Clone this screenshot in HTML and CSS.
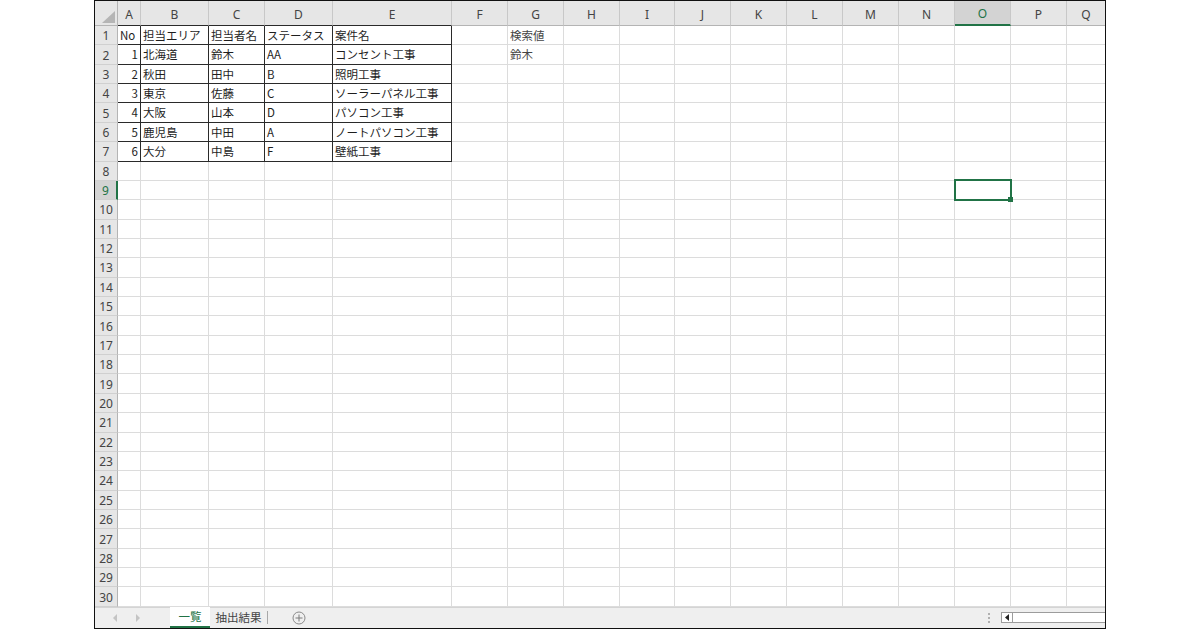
FILE: index.html
```html
<!DOCTYPE html>
<html lang="ja">
<head>
<meta charset="utf-8">
<title>Sheet</title>
<link rel="stylesheet" href="styles.css">
</head>
<body>
<div class="frame">
  <div class="sheet">
    <div class="row head">
      <div class="corner"><svg width="14" height="13" viewBox="0 0 14 13"><polygon points="13,0 13,12 0,12" fill="#b5b5b5"/></svg></div>
      <div class="ch tb">A</div><div class="ch tb">B</div><div class="ch tb">C</div><div class="ch tb">D</div><div class="ch tb">E</div><div class="ch">F</div><div class="ch">G</div><div class="ch">H</div><div class="ch">I</div><div class="ch">J</div><div class="ch">K</div><div class="ch">L</div><div class="ch">M</div><div class="ch">N</div><div class="ch sel">O</div><div class="ch">P</div><div class="ch last">Q</div>
    </div>
    <div class="row"><div class="rh">1</div><div class="c t">No</div><div class="c t">担当エリア</div><div class="c t">担当者名</div><div class="c t">ステータス</div><div class="c t">案件名</div><div class="c"></div><div class="c g">検索値</div><i></i><i></i><i></i><i></i><i></i><i></i><i></i><i></i><i></i><i class="last"></i></div>
    <div class="row"><div class="rh">2</div><div class="c t n">1</div><div class="c t">北海道</div><div class="c t">鈴木</div><div class="c t">AA</div><div class="c t">コンセント工事</div><div class="c"></div><div class="c g">鈴木</div><i></i><i></i><i></i><i></i><i></i><i></i><i></i><i></i><i></i><i class="last"></i></div>
    <div class="row"><div class="rh">3</div><div class="c t n">2</div><div class="c t">秋田</div><div class="c t">田中</div><div class="c t">B</div><div class="c t">照明工事</div><i></i><i></i><i></i><i></i><i></i><i></i><i></i><i></i><i></i><i></i><i></i><i class="last"></i></div>
    <div class="row"><div class="rh">4</div><div class="c t n">3</div><div class="c t">東京</div><div class="c t">佐藤</div><div class="c t">C</div><div class="c t">ソーラーパネル工事</div><i></i><i></i><i></i><i></i><i></i><i></i><i></i><i></i><i></i><i></i><i></i><i class="last"></i></div>
    <div class="row"><div class="rh">5</div><div class="c t n">4</div><div class="c t">大阪</div><div class="c t">山本</div><div class="c t">D</div><div class="c t">パソコン工事</div><i></i><i></i><i></i><i></i><i></i><i></i><i></i><i></i><i></i><i></i><i></i><i class="last"></i></div>
    <div class="row"><div class="rh">6</div><div class="c t n">5</div><div class="c t">鹿児島</div><div class="c t">中田</div><div class="c t">A</div><div class="c t">ノートパソコン工事</div><i></i><i></i><i></i><i></i><i></i><i></i><i></i><i></i><i></i><i></i><i></i><i class="last"></i></div>
    <div class="row"><div class="rh">7</div><div class="c t n">6</div><div class="c t">大分</div><div class="c t">中島</div><div class="c t">F</div><div class="c t">壁紙工事</div><i></i><i></i><i></i><i></i><i></i><i></i><i></i><i></i><i></i><i></i><i></i><i class="last"></i></div>
    <div class="row"><div class="rh">8</div><i></i><i></i><i></i><i></i><i></i><i></i><i></i><i></i><i></i><i></i><i></i><i></i><i></i><i></i><i></i><i></i><i class="last"></i></div>
    <div class="row"><div class="rh rsel">9</div><i></i><i></i><i></i><i></i><i></i><i></i><i></i><i></i><i></i><i></i><i></i><i></i><i></i><i></i><i class="active"></i><i></i><i class="last"></i></div>
    <div class="row"><div class="rh">10</div><i></i><i></i><i></i><i></i><i></i><i></i><i></i><i></i><i></i><i></i><i></i><i></i><i></i><i></i><i></i><i></i><i class="last"></i></div>
    <div class="row"><div class="rh">11</div><i></i><i></i><i></i><i></i><i></i><i></i><i></i><i></i><i></i><i></i><i></i><i></i><i></i><i></i><i></i><i></i><i class="last"></i></div>
    <div class="row"><div class="rh">12</div><i></i><i></i><i></i><i></i><i></i><i></i><i></i><i></i><i></i><i></i><i></i><i></i><i></i><i></i><i></i><i></i><i class="last"></i></div>
    <div class="row"><div class="rh">13</div><i></i><i></i><i></i><i></i><i></i><i></i><i></i><i></i><i></i><i></i><i></i><i></i><i></i><i></i><i></i><i></i><i class="last"></i></div>
    <div class="row"><div class="rh">14</div><i></i><i></i><i></i><i></i><i></i><i></i><i></i><i></i><i></i><i></i><i></i><i></i><i></i><i></i><i></i><i></i><i class="last"></i></div>
    <div class="row"><div class="rh">15</div><i></i><i></i><i></i><i></i><i></i><i></i><i></i><i></i><i></i><i></i><i></i><i></i><i></i><i></i><i></i><i></i><i class="last"></i></div>
    <div class="row"><div class="rh">16</div><i></i><i></i><i></i><i></i><i></i><i></i><i></i><i></i><i></i><i></i><i></i><i></i><i></i><i></i><i></i><i></i><i class="last"></i></div>
    <div class="row"><div class="rh">17</div><i></i><i></i><i></i><i></i><i></i><i></i><i></i><i></i><i></i><i></i><i></i><i></i><i></i><i></i><i></i><i></i><i class="last"></i></div>
    <div class="row"><div class="rh">18</div><i></i><i></i><i></i><i></i><i></i><i></i><i></i><i></i><i></i><i></i><i></i><i></i><i></i><i></i><i></i><i></i><i class="last"></i></div>
    <div class="row"><div class="rh">19</div><i></i><i></i><i></i><i></i><i></i><i></i><i></i><i></i><i></i><i></i><i></i><i></i><i></i><i></i><i></i><i></i><i class="last"></i></div>
    <div class="row"><div class="rh">20</div><i></i><i></i><i></i><i></i><i></i><i></i><i></i><i></i><i></i><i></i><i></i><i></i><i></i><i></i><i></i><i></i><i class="last"></i></div>
    <div class="row"><div class="rh">21</div><i></i><i></i><i></i><i></i><i></i><i></i><i></i><i></i><i></i><i></i><i></i><i></i><i></i><i></i><i></i><i></i><i class="last"></i></div>
    <div class="row"><div class="rh">22</div><i></i><i></i><i></i><i></i><i></i><i></i><i></i><i></i><i></i><i></i><i></i><i></i><i></i><i></i><i></i><i></i><i class="last"></i></div>
    <div class="row"><div class="rh">23</div><i></i><i></i><i></i><i></i><i></i><i></i><i></i><i></i><i></i><i></i><i></i><i></i><i></i><i></i><i></i><i></i><i class="last"></i></div>
    <div class="row"><div class="rh">24</div><i></i><i></i><i></i><i></i><i></i><i></i><i></i><i></i><i></i><i></i><i></i><i></i><i></i><i></i><i></i><i></i><i class="last"></i></div>
    <div class="row"><div class="rh">25</div><i></i><i></i><i></i><i></i><i></i><i></i><i></i><i></i><i></i><i></i><i></i><i></i><i></i><i></i><i></i><i></i><i class="last"></i></div>
    <div class="row"><div class="rh">26</div><i></i><i></i><i></i><i></i><i></i><i></i><i></i><i></i><i></i><i></i><i></i><i></i><i></i><i></i><i></i><i></i><i class="last"></i></div>
    <div class="row"><div class="rh">27</div><i></i><i></i><i></i><i></i><i></i><i></i><i></i><i></i><i></i><i></i><i></i><i></i><i></i><i></i><i></i><i></i><i class="last"></i></div>
    <div class="row"><div class="rh">28</div><i></i><i></i><i></i><i></i><i></i><i></i><i></i><i></i><i></i><i></i><i></i><i></i><i></i><i></i><i></i><i></i><i class="last"></i></div>
    <div class="row"><div class="rh">29</div><i></i><i></i><i></i><i></i><i></i><i></i><i></i><i></i><i></i><i></i><i></i><i></i><i></i><i></i><i></i><i></i><i class="last"></i></div>
    <div class="row"><div class="rh">30</div><i></i><i></i><i></i><i></i><i></i><i></i><i></i><i></i><i></i><i></i><i></i><i></i><i></i><i></i><i></i><i></i><i class="last"></i></div>
  </div>
  <div class="tabbar">
    <div class="nav">
      <svg width="6" height="8" viewBox="0 0 6 8"><polygon points="5,0 5,8 1,4" fill="#c4c4c4"/></svg>
      <svg width="6" height="8" viewBox="0 0 6 8"><polygon points="1,0 1,8 5,4" fill="#c4c4c4"/></svg>
    </div>
    <div class="tab on">一覧</div>
    <div class="tab">抽出結果</div>
    <div class="tsep"></div>
    <div class="add"><svg width="14" height="14" viewBox="0 0 14 14"><circle cx="7" cy="7" r="6" fill="none" stroke="#8a8a8a" stroke-width="1"/><path d="M7 3.5V10.5M3.5 7H10.5" stroke="#7a7a7a" stroke-width="1"/></svg></div>
    <div class="spacer"></div>
    <div class="grip"><span></span><span></span><span></span></div>
    <div class="hscroll"><div class="harrow"><svg width="5" height="7" viewBox="0 0 5 7"><polygon points="4,0 4,7 0,3.5" fill="#222"/></svg></div><div class="htrack"></div></div>
  </div>
</div>
</body>
</html>
```

FILE: styles.css
```css
* { box-sizing: border-box; }
html, body { margin: 0; padding: 0; background: #ffffff; }
body { width: 1200px; height: 630px; overflow: hidden; }

.frame {
  margin-left: 94px;
  width: 1012px;
  height: 629px;
  border: 1px solid #111;
  display: flex;
  flex-direction: column;
  background: #fff;
  overflow: hidden;
}

.sheet {
  display: grid;
  grid-template-rows: 25px repeat(30, 19.37px);
}

.row {
  display: grid;
  grid-template-columns: 23px 23px 68px 56px 68px 119px 56px 56px 56px 55px 56px 56px 56px 56px 56px 56px 56px 1fr;
}

.row > * {
  border-right: 1px solid #dcdcdc;
  border-bottom: 1px solid #dcdcdc;
  min-width: 0;
  overflow: hidden;
}
.row > .last { border-right: none; }

.corner {
  background: #e6e6e6;
  display: flex;
  align-items: flex-end;
  justify-content: flex-end;
  padding: 0 1px 1px 0;
}
.row.head > * {
  background: #e6e6e6;
  border-right: 1px solid #c8c8c8;
  border-bottom: 1px solid #b4b4b4;
}
.row.head > .corner { border-right: 1px solid #b4b4b4; }
.row.head > .last { border-right: none; }

.ch {
  display: flex;
  align-items: center;
  justify-content: center;
  padding-top: 2px;
  font-family: "Noto Sans", "Open Sans", sans-serif;
  font-size: 12px;
  color: #444;
}
.row.head > .ch.tb { border-bottom-color: #2a2a2a; }
.row.head > .ch.sel {
  background: #d3d3d3;
  color: #217346;
  border-bottom: 2px solid #217346;
}

.rh {
  background: #e6e6e6;
  display: flex;
  align-items: center;
  justify-content: center;
  font-family: "Noto Sans", "Open Sans", sans-serif;
  font-size: 12px;
  color: #444;
  padding-top: 1px;
}
.row > .rh {
  border-right: 1px solid #b4b4b4;
  border-bottom: 1px solid #d0d0d0;
}
.row > .rh.rsel {
  background: #d3d3d3;
  color: #217346;
  border-right: 2px solid #217346;
}

.c {
  display: flex;
  align-items: center;
  padding: 1px 0 0 2px;
  font-family: "Noto Sans CJK JP", "Noto Sans", sans-serif;
  font-size: 11.5px;
  line-height: 1;
  color: #1e1e1e;
  white-space: nowrap;
}
.row > .c.t {
  border-right: 1px solid #2a2a2a;
  border-bottom: 1px solid #2a2a2a;
}
.c.n { justify-content: flex-end; padding-right: 2px; padding-left: 0; }
.c.g { color: #444; }

.row > i.active {
  position: relative;
  overflow: visible;
}
.row > i.active::after {
  content: "";
  position: absolute;
  top: -2px;
  left: -1px;
  right: -2px;
  bottom: -2px;
  border: 2px solid #217346;
}
.row > i.active::before {
  content: "";
  position: absolute;
  right: -3px;
  bottom: -3px;
  width: 5px;
  height: 5px;
  background: #217346;
  z-index: 1;
}

.tabbar {
  flex: 1;
  background: #efefef;
  border-top: 1px solid #d4d4d4;
  display: flex;
  align-items: stretch;
  font-family: "Noto Sans CJK JP", "Noto Sans", sans-serif;
  font-size: 11.5px;
  line-height: 1;
  color: #444;
  white-space: nowrap;
}
.nav {
  width: 75px;
  display: flex;
  align-items: center;
  gap: 17px;
  padding-left: 17px;
}
.tab {
  display: flex;
  align-items: center;
  justify-content: center;
  height: 100%;
}
.tab.on {
  width: 40px;
  background: #fff;
  color: #217346;
  margin-top: -1px;
  height: calc(100% + 1px);
  border-bottom: 2px solid #217346;
}
.tab:not(.on) { width: 57px; padding-bottom: 1px; }
.tsep {
  width: 1px;
  background: #a8a8a8;
  margin: 3px 0 4px;
}
.add {
  display: flex;
  align-items: center;
  margin-left: 24px;
}
.spacer { flex: 1; }
.grip {
  display: flex;
  flex-direction: column;
  justify-content: center;
  gap: 2px;
  margin-right: 11px;
}
.grip span {
  width: 2px;
  height: 2px;
  background: #b0b0b0;
}
.hscroll {
  width: 104px;
  margin: 4px 0 5px;
  display: flex;
  background: #fff;
  border: 1px solid #9c9c9c;
  border-right: none;
}
.harrow {
  width: 11px;
  border-right: 1px solid #9c9c9c;
  display: flex;
  align-items: center;
  justify-content: center;
}
.htrack { flex: 1; }
```
